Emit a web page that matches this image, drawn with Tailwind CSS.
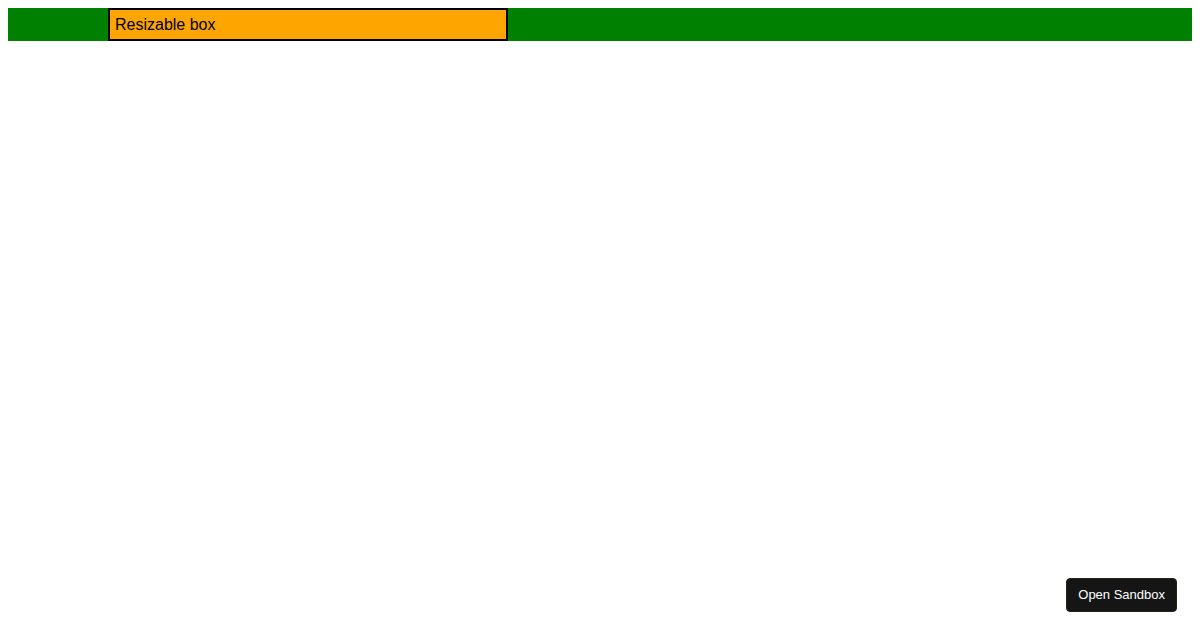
<!DOCTYPE html>
<html lang="en">
  <head>
    <meta charset="UTF-8" />
    <title>Resizable box</title>
    <meta name="viewport" content="width=device-width, initial-scale=1.0" />
    <script src="https://cdn.jsdelivr.net/npm/@tailwindcss/browser@4"></script>
  </head>
  <body
    class="flex min-h-screen flex-col justify-between bg-white p-2 font-['Liberation_Sans',Arial,sans-serif] text-black"
  >
    <!-- Track with the resizable box -->
    <main class="bg-[#008000] pl-[100px]">
      <div
        id="box"
        class="w-[400px] max-w-full border-2 border-black bg-[#ffa500] p-[5px] text-base leading-[19px]"
      >
        Resizable box
      </div>
    </main>

    <footer class="flex justify-end pr-[15px] pb-[10px]">
      <button
        type="button"
        class="h-[34px] cursor-pointer rounded-sm border border-[#25221e] bg-[#151515] px-[11px] text-[13px] leading-4 text-white"
      >
        Open Sandbox
      </button>
    </footer>

    <script>
      const box = document.getElementById('box')
      const EDGE = 8
      let resizing = false

      // True when the pointer is close to the right edge
      function onEdge(e) {
        const { right } = box.getBoundingClientRect()
        return Math.abs(e.clientX - right) <= EDGE
      }

      box.addEventListener('pointerdown', (e) => {
        if (!onEdge(e)) return
        resizing = true
        box.setPointerCapture(e.pointerId)
        e.preventDefault()
      })

      box.addEventListener('pointermove', (e) => {
        box.style.cursor = resizing || onEdge(e) ? 'ew-resize' : ''
        if (!resizing) return
        const { left } = box.getBoundingClientRect()
        box.style.width = `${Math.max(120, e.clientX - left)}px`
      })

      box.addEventListener('pointerup', () => {
        resizing = false
      })
    </script>
  </body>
</html>
